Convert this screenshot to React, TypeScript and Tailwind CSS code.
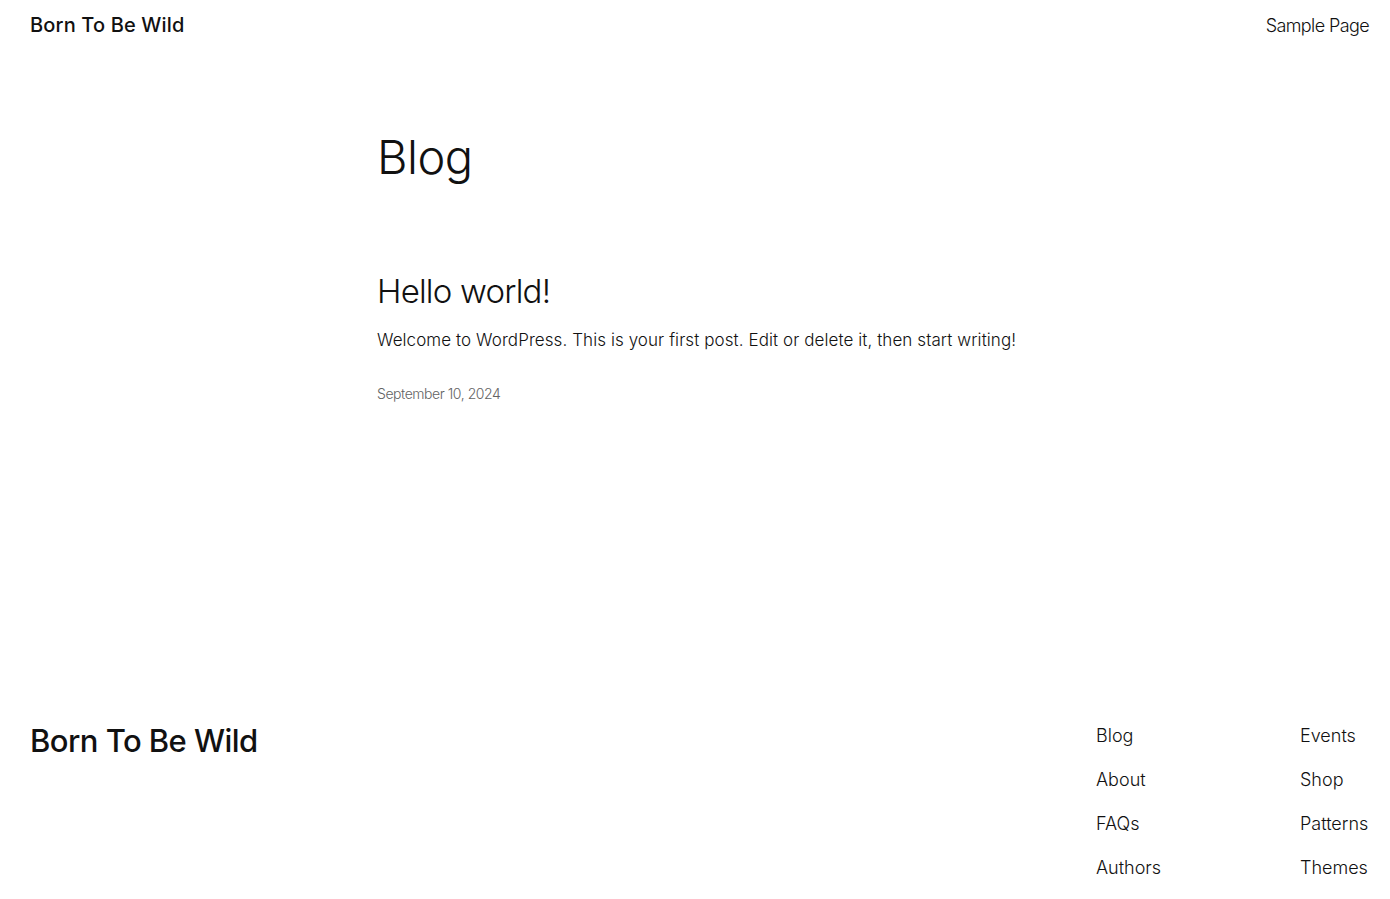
import React, { JSX } from "react";

const footerLinks = [
	["Blog", "Events"],
	["About", "Shop"],
	["FAQs", "Patterns"],
	["Authors", "Themes"],
];

export default function App(): JSX.Element {
	return (
		<div className="min-h-[899px] bg-white text-[#111111] font-['Inter','Noto_Sans',sans-serif] flex flex-col">
			<header className="flex items-center justify-between pl-[30px] pr-[21px] h-[50px]">
				<a className="text-[20px] font-medium tracking-[0.15px]">Born To Be Wild</a>
				<nav className="text-[18px] font-light tracking-[-0.6px]">Sample Page</nav>
			</header>

			<main className="w-[636px] mx-auto pt-[79px]">
				<h1 className="text-[47px] font-light leading-[1.2] tracking-[-0.5px]">Blog</h1>
				<article className="mt-[87px]">
					<h2 className="text-[33px] font-light leading-[1.2] tracking-[-0.8px]">Hello world!</h2>
					<p className="mt-[16px] text-[17px] font-light whitespace-nowrap tracking-[0.08px]">
						Welcome to WordPress. This is your first post. Edit or delete it, then start writing!
					</p>
					<p className="mt-[30px] text-[14px] font-light text-[#636363] tracking-[-0.45px]">September 10, 2024</p>
				</article>
			</main>

			<footer className="mt-auto flex justify-between items-start pl-[30px] pr-[20px] pb-[18px]">
				<div className="text-[31px] font-medium tracking-[-0.55px] leading-none pt-[3px]">Born To Be Wild</div>
				<div className="grid grid-cols-[204px_70px] gap-y-[17px] text-[18px] font-light">
					{footerLinks.map(([a, b]) => (
						<React.Fragment key={a}>
							<a>{a}</a>
							<a>{b}</a>
						</React.Fragment>
					))}
				</div>
			</footer>
		</div>
	);
}
